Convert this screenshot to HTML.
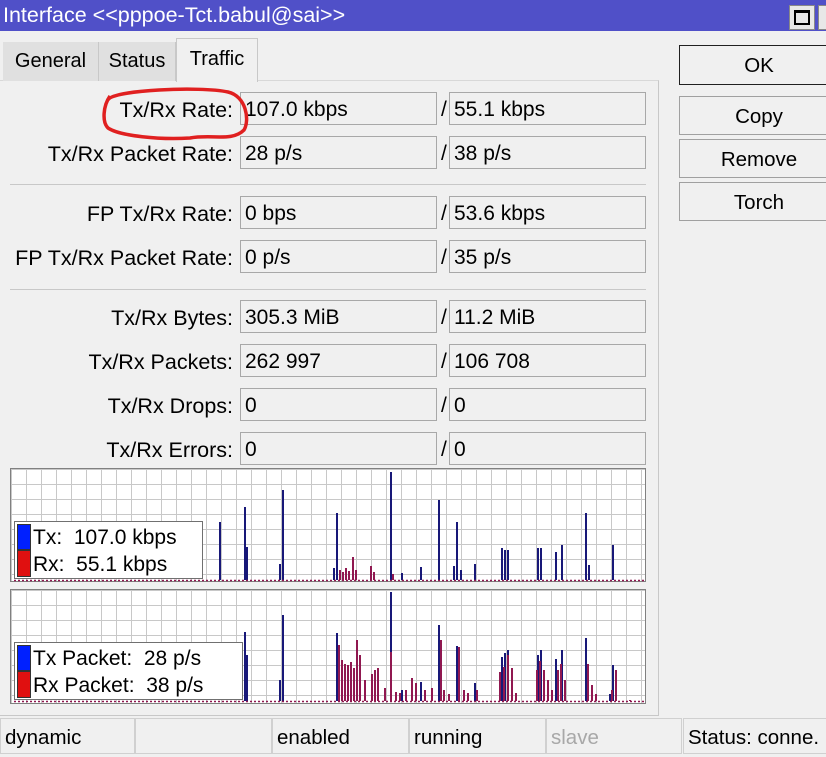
<!DOCTYPE html>
<html><head><meta charset="utf-8">
<style>
*{margin:0;padding:0;box-sizing:border-box}
body{width:826px;height:754px;background:#f0f0f0;position:relative;overflow:hidden;font-family:"Liberation Sans",Arial,sans-serif;color:#000}
.a{position:absolute}
.title{left:0;top:0;width:826px;height:31px;background:#5050c8;color:#fff;font-size:21.5px;line-height:31px;padding-left:3px}
.wb{top:5px;width:26px;height:25px;background:#e8e8e8;border:1px solid #888}
.tab{top:42px;height:39px;font-size:20px;line-height:38px;text-align:center;background:#e0e0e0;border-right:1px solid #c8c8c8}
.panel{left:0;top:80px;width:659px;height:636px;border-right:1px solid #c8c8c8;border-bottom:1px solid #c8c8c8;border-top:1px solid #d8d8d8}
.lbl{font-size:21.5px;text-align:right;width:233px;left:0;height:33px;line-height:36px}
.f{height:33px;border:1px solid #a8a8a8;background:#f0f0f0;font-size:21px;line-height:34px;padding-left:4px}
.f1{left:240px;width:197px}
.f2{left:449px;width:197px}
.sl{left:441px;font-size:21px;height:33px;line-height:36px}
.sep{left:10px;width:636px;height:1px;background:#c8c8c8}
.btn{left:679px;width:160px;border:1px solid #a0a0a0;background:#f0f0f0;font-size:20.5px;text-align:center}
.st{top:718px;height:36px;border:1px solid #d0d0d0;font-size:20.5px;line-height:38px;padding-left:4px;background:#f0f0f0}
.leg{background:#fff;border:1px solid #707070;font-size:21px}
</style></head><body>
<div class="a title">Interface &lt;&lt;pppoe-Tct.babul@sai&gt;&gt;</div>
<div class="a wb" style="left:789px"><div style="position:absolute;left:4px;top:4px;width:16px;height:15px;border:2px solid #000;border-top-width:3px"></div></div>
<div class="a wb" style="left:818px"></div>

<div class="a panel"></div>
<div class="a tab" style="left:3px;width:96px">General</div>
<div class="a tab" style="left:99px;width:77px">Status</div>
<div class="a tab" style="left:176px;width:82px;top:38px;height:44px;background:#f0f0f0;border:1px solid #c8c8c8;border-bottom:none;line-height:40px">Traffic</div>

<div class="a lbl" style="top:92px">Tx/Rx Rate:</div>
<div class="a f f1" style="top:92px">107.0 kbps</div><div class="a sl" style="top:92px">/</div><div class="a f f2" style="top:92px">55.1 kbps</div>
<div class="a lbl" style="top:136px">Tx/Rx Packet Rate:</div>
<div class="a f f1" style="top:136px">28 p/s</div><div class="a sl" style="top:136px">/</div><div class="a f f2" style="top:136px">38 p/s</div>
<div class="a sep" style="top:184px"></div>
<div class="a lbl" style="top:196px">FP Tx/Rx Rate:</div>
<div class="a f f1" style="top:196px">0 bps</div><div class="a sl" style="top:196px">/</div><div class="a f f2" style="top:196px">53.6 kbps</div>
<div class="a lbl" style="top:240px">FP Tx/Rx Packet Rate:</div>
<div class="a f f1" style="top:240px">0 p/s</div><div class="a sl" style="top:240px">/</div><div class="a f f2" style="top:240px">35 p/s</div>
<div class="a sep" style="top:289px"></div>
<div class="a lbl" style="top:300px">Tx/Rx Bytes:</div>
<div class="a f f1" style="top:300px">305.3 MiB</div><div class="a sl" style="top:300px">/</div><div class="a f f2" style="top:300px">11.2 MiB</div>
<div class="a lbl" style="top:344px">Tx/Rx Packets:</div>
<div class="a f f1" style="top:344px">262 997</div><div class="a sl" style="top:344px">/</div><div class="a f f2" style="top:344px">106 708</div>
<div class="a lbl" style="top:388px">Tx/Rx Drops:</div>
<div class="a f f1" style="top:388px">0</div><div class="a sl" style="top:388px">/</div><div class="a f f2" style="top:388px">0</div>
<div class="a lbl" style="top:432px">Tx/Rx Errors:</div>
<div class="a f f1" style="top:432px">0</div><div class="a sl" style="top:432px">/</div><div class="a f f2" style="top:432px">0</div>

<svg class="a" style="left:0;top:0" width="826" height="754">
<defs>
<pattern id="g" x="11" y="469" width="15" height="15" patternUnits="userSpaceOnUse"><path d="M0 0.5H15M0.5 0V15" stroke="#c8c8c8" stroke-width="1" fill="none"/></pattern>
<pattern id="g2" x="11" y="590" width="15" height="15" patternUnits="userSpaceOnUse"><path d="M0 0.5H15M0.5 0V15" stroke="#c8c8c8" stroke-width="1" fill="none"/></pattern>
</defs>
<path d="M108 100 C 112 90, 200 86, 228 92 C 246 96, 250 120, 244 130 C 232 142, 212 134, 190 138 C 160 140, 120 136, 108 128 C 102 122, 103 106, 110 96" fill="none" stroke="#e02020" stroke-width="3.5"/>
<rect x="10.5" y="468.5" width="635" height="113" fill="#fff" stroke="#808080"/>
<rect x="11" y="469" width="634" height="112" fill="url(#g)"/>
<rect x="10.5" y="589.5" width="635" height="114" fill="#fff" stroke="#808080"/>
<rect x="11" y="590" width="634" height="113" fill="url(#g2)"/>
<g stroke="#181878" stroke-width="2">
<path d="M220 580V522M245 580V507M247 580V547M280 580V564M283 580V490M337 580V513M391 580V472M439 580V500M457 580V522M475 580V564M502 580V548M505 580V550M508 580V550M538 580V548M541 580V548M556 580V552M562 580V545M586 580V513M589 580V565M613 580V545M421 580V567M454 580V566M461 580V570M402 580V573M334 580V568"/>
<path d="M245 701V632M247 701V655M283 701V615M280 701V680M337 701V633M391 701V592M439 701V625M457 701V646M475 701V683M502 701V657M505 701V653M508 701V650M538 701V655M541 701V650M556 701V659M562 701V650M586 701V638M613 701V665M421 701V682M402 701V690M610 701V694"/>
</g>
<g stroke="#901850" stroke-width="2">
<path d="M340 580V570M343 580V572M346 580V568M349 580V571M353 580V557M356 580V570M371 580V566M374 580V572M393 580V574"/>
<path d="M14 580.5H645" stroke-dasharray="2 2" stroke-width="1.5"/>
<path d="M339 701V645M342 701V660M345 701V664M348 701V665M351 701V662M354 701V668M357 701V640M360 701V655M365 701V680M372 701V674M375 701V670M378 701V668M385 701V688M391 701V652M396 701V692M400 701V693M406 701V690M412 701V678M416 701V683M425 701V690M432 701V688M441 701V640M444 701V690M449 701V694M459 701V647M464 701V690M468 701V693M477 701V690M500 701V672M504 701V667M508 701V655M512 701V668M516 701V693M537 701V670M540 701V661M544 701V670M548 701V680M552 701V690M558 701V670M561 701V664M565 701V680M588 701V664M592 701V685M596 701V694M612 701V690M616 701V670M630 701V700"/>
<path d="M14 701.5H645" stroke-dasharray="2 2" stroke-width="1.5"/>
</g>
</svg>

<div class="a leg" style="left:14px;top:521px;width:189px;height:58px">
<div class="a" style="left:2px;top:2px;width:14px;height:26px;background:#0020ff;border:1px solid #333"></div>
<div class="a" style="left:2px;top:28px;width:14px;height:27px;background:#e01010;border:1px solid #333"></div>
<div class="a" style="left:18px;top:2px;line-height:28px">Tx:&nbsp; 107.0 kbps</div>
<div class="a" style="left:18px;top:29px;line-height:28px">Rx:&nbsp; 55.1 kbps</div>
</div>
<div class="a leg" style="left:14px;top:642px;width:229px;height:58px">
<div class="a" style="left:2px;top:2px;width:14px;height:26px;background:#0020ff;border:1px solid #333"></div>
<div class="a" style="left:2px;top:28px;width:14px;height:27px;background:#e01010;border:1px solid #333"></div>
<div class="a" style="left:18px;top:2px;line-height:28px">Tx Packet:&nbsp; 28 p/s</div>
<div class="a" style="left:18px;top:29px;line-height:28px">Rx Packet:&nbsp; 38 p/s</div>
</div>

<div class="a btn" style="top:45px;height:40px;line-height:40px;border-color:#202020">OK</div>
<div class="a btn" style="top:96px;height:39px;line-height:39px">Copy</div>
<div class="a btn" style="top:139px;height:39px;line-height:39px">Remove</div>
<div class="a btn" style="top:182px;height:39px;line-height:39px">Torch</div>

<div class="a st" style="left:0;width:135px">dynamic</div>
<div class="a st" style="left:135px;width:137px"></div>
<div class="a st" style="left:272px;width:137px">enabled</div>
<div class="a st" style="left:409px;width:137px">running</div>
<div class="a st" style="left:546px;width:136px;color:#a8a8a8">slave</div>
<div class="a st" style="left:683px;width:150px">Status: conne.</div>
</body></html>
